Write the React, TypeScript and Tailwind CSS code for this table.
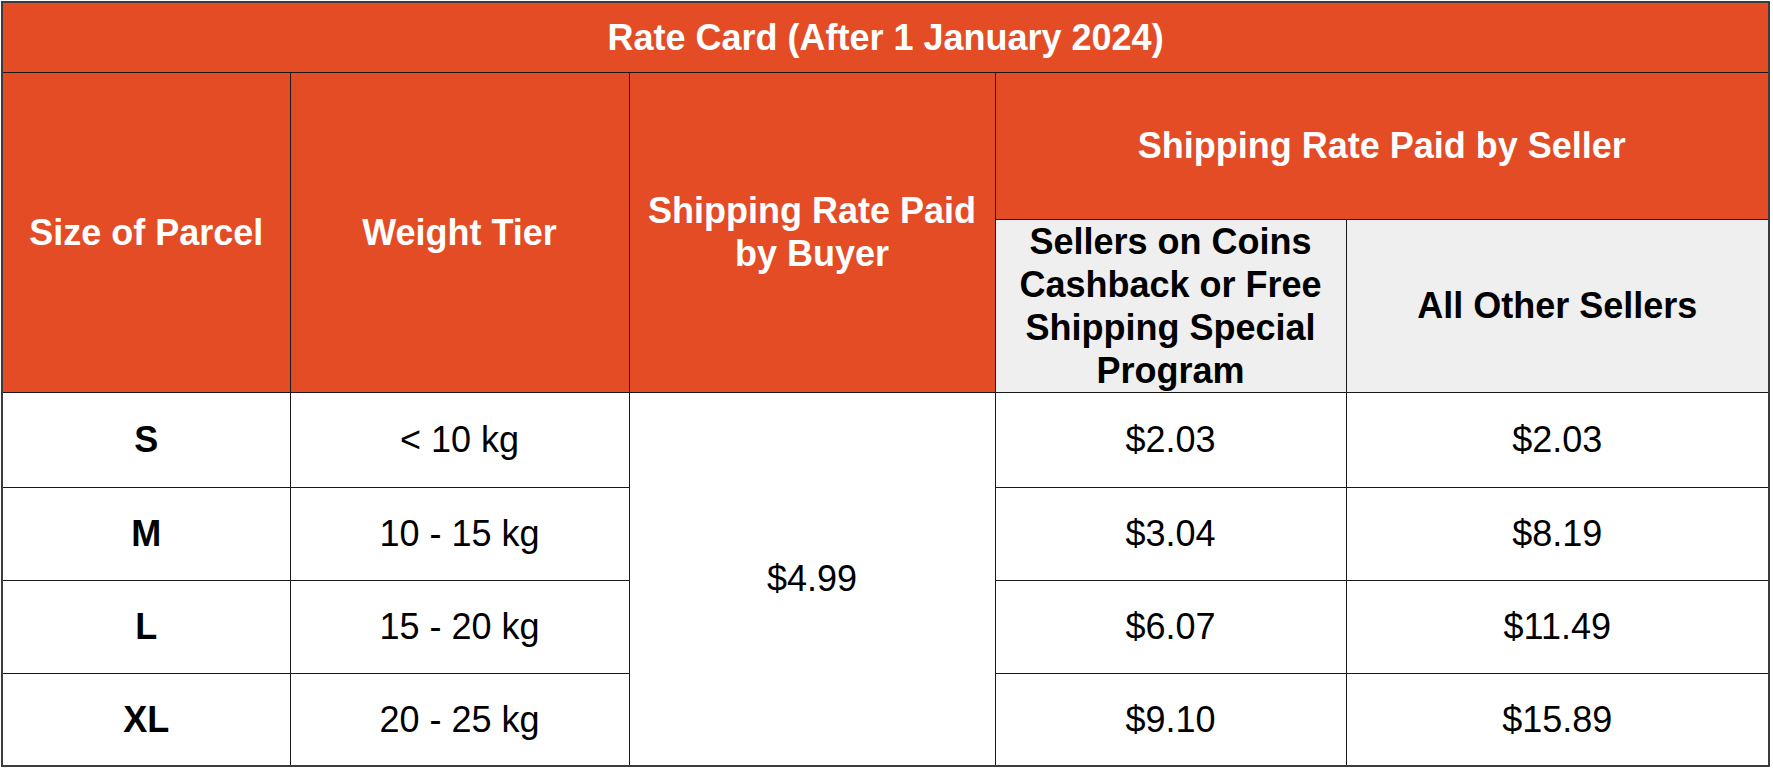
const ORANGE = "bg-[#e44c26]";

const ROWS = [
  { size: "S", weight: "< 10 kg", coins: "$2.03", other: "$2.03" },
  { size: "M", weight: "10 - 15 kg", coins: "$3.04", other: "$8.19" },
  { size: "L", weight: "15 - 20 kg", coins: "$6.07", other: "$11.49" },
  { size: "XL", weight: "20 - 25 kg", coins: "$9.10", other: "$15.89" },
];

const cell = "border border-[#1a1a1a] text-center align-middle px-2";

export default function App() {
  return (
    <div className="bg-white w-[1773px] h-[770px] pt-[1px] pl-[1px]">
      <table
        className="table-fixed border-collapse border-2 border-[#3c3c3c] w-[1769px] text-[36px] leading-[43px] text-black"
        style={{ fontFamily: '"Liberation Sans", Arial, sans-serif' }}
      >
        <colgroup>
          <col className="w-[288px]" />
          <col className="w-[339px]" />
          <col className="w-[366px]" />
          <col className="w-[351px]" />
          <col className="w-[423px]" />
        </colgroup>
        <thead>
          <tr className="h-[70px]">
            <th colSpan={5} className={`${cell} ${ORANGE} text-white font-bold`}>
              Rate Card (After 1 January 2024)
            </th>
          </tr>
          <tr className="h-[147px]">
            <th rowSpan={2} className={`${cell} ${ORANGE} text-white font-bold`}>
              Size of Parcel
            </th>
            <th rowSpan={2} className={`${cell} ${ORANGE} text-white font-bold`}>
              Weight Tier
            </th>
            <th rowSpan={2} className={`${cell} ${ORANGE} text-white font-bold`}>
              Shipping Rate Paid
              <br />
              by Buyer
            </th>
            <th colSpan={2} className={`${cell} ${ORANGE} text-white font-bold`}>
              Shipping Rate Paid by Seller
            </th>
          </tr>
          <tr className="h-[173px]">
            <th className={`${cell} bg-[#efefef] font-bold`}>
              Sellers on Coins
              <br />
              Cashback or Free
              <br />
              Shipping Special
              <br />
              Program
            </th>
            <th className={`${cell} bg-[#efefef] font-bold`}>All Other Sellers</th>
          </tr>
        </thead>
        <tbody>
          {ROWS.map((row, i) => (
            <tr key={row.size} className={i === 0 ? "h-[95px]" : "h-[93px]"}>
              <td className={`${cell} font-bold`}>{row.size}</td>
              <td className={cell}>{row.weight}</td>
              {i === 0 && (
                <td rowSpan={4} className={cell}>
                  $4.99
                </td>
              )}
              <td className={cell}>{row.coins}</td>
              <td className={cell}>{row.other}</td>
            </tr>
          ))}
        </tbody>
      </table>
    </div>
  );
}
